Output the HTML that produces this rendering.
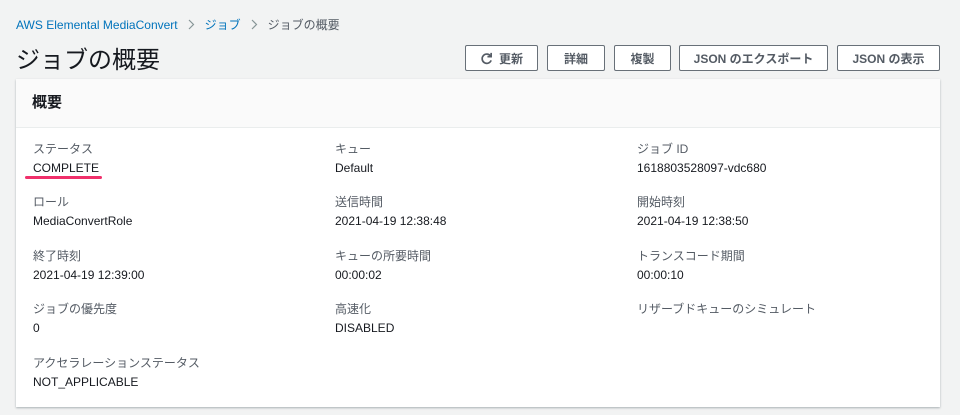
<!DOCTYPE html>
<html><head><meta charset="utf-8"><style>
body{margin:0;width:960px;height:415px;background:#f2f3f3;font-family:"Liberation Sans","Noto Sans CJK JP",sans-serif;color:#16191f;position:relative;overflow:hidden}
.a{position:absolute;white-space:nowrap}
.bc{top:16px;left:16px;font-size:12px;color:#545b64;display:flex;align-items:center}
.bc .l{color:#0073bb}
.bc svg{margin:0 10px}
h1{position:absolute;margin:0;top:40px;left:16px;font-size:24px;font-weight:400;color:#16191f}
.btn{position:absolute;top:45px;border:1px solid #687078;border-radius:2px;background:#fff;font-size:12px;font-weight:700;color:#545b64;display:flex;align-items:center;justify-content:center;box-sizing:border-box;height:26px}
.card{position:absolute;left:16px;top:79px;width:924px;height:328px;background:#fff;box-shadow:0 1px 2px rgba(0,28,36,.3)}
.hd{height:48px;background:#fafafa;border-bottom:1px solid #eaeded;font-size:15px;font-weight:700;line-height:48px;padding-left:16px}
.lb{font-size:12px;color:#545b64}
.v{font-size:12px;color:#16191f}
</style></head><body>
<div class="a bc"><span class="l">AWS Elemental MediaConvert</span><svg width="7" height="11" viewBox="0 0 7 11"><path d="M1 1l4.5 4.5L1 10" fill="none" stroke="#879596" stroke-width="1.2"/></svg><span class="l">ジョブ</span><svg width="7" height="11" viewBox="0 0 7 11"><path d="M1 1l4.5 4.5L1 10" fill="none" stroke="#879596" stroke-width="1.2"/></svg>ジョブの概要</div>
<h1>ジョブの概要</h1>
<div class="btn" style="left:465px;width:73px"><svg width="13" height="13" viewBox="0 0 14 14" style="margin-right:6px"><path d="M11.5 4.5A5 5 0 1 0 12 9" fill="none" stroke="#545b64" stroke-width="1.8"/><path d="M12 1v4H8" fill="none" stroke="#545b64" stroke-width="1.8"/></svg>更新</div>
<div class="btn" style="left:547px;width:58px">詳細</div>
<div class="btn" style="left:614px;width:57px">複製</div>
<div class="btn" style="left:679px;width:149px">JSON のエクスポート</div>
<div class="btn" style="left:837px;width:103px">JSON の表示</div>
<div class="card"><div class="hd">概要</div></div>
<div class="a lb" style="left:33px;top:140px">ステータス</div><div class="a v" style="left:33px;top:161px">COMPLETE</div>
<div class="a" style="left:25px;top:176px;width:77px;height:3px;border-radius:2px;background:#f0306b"></div>
<div class="a lb" style="left:335px;top:140px">キュー</div><div class="a v" style="left:335px;top:161px">Default</div>
<div class="a lb" style="left:637px;top:140px">ジョブ ID</div><div class="a v" style="left:637px;top:161px">1618803528097-vdc680</div>
<div class="a lb" style="left:33px;top:193px">ロール</div><div class="a v" style="left:33px;top:214px">MediaConvertRole</div>
<div class="a lb" style="left:335px;top:193px">送信時間</div><div class="a v" style="left:335px;top:214px">2021-04-19 12:38:48</div>
<div class="a lb" style="left:637px;top:193px">開始時刻</div><div class="a v" style="left:637px;top:214px">2021-04-19 12:38:50</div>
<div class="a lb" style="left:33px;top:247px">終了時刻</div><div class="a v" style="left:33px;top:268px">2021-04-19 12:39:00</div>
<div class="a lb" style="left:335px;top:247px">キューの所要時間</div><div class="a v" style="left:335px;top:268px">00:00:02</div>
<div class="a lb" style="left:637px;top:247px">トランスコード期間</div><div class="a v" style="left:637px;top:268px">00:00:10</div>
<div class="a lb" style="left:33px;top:300px">ジョブの優先度</div><div class="a v" style="left:33px;top:321px">0</div>
<div class="a lb" style="left:335px;top:300px">高速化</div><div class="a v" style="left:335px;top:321px">DISABLED</div>
<div class="a lb" style="left:637px;top:300px">リザーブドキューのシミュレート</div>
<div class="a lb" style="left:33px;top:354px">アクセラレーションステータス</div><div class="a v" style="left:33px;top:375px">NOT_APPLICABLE</div>
</body></html>
